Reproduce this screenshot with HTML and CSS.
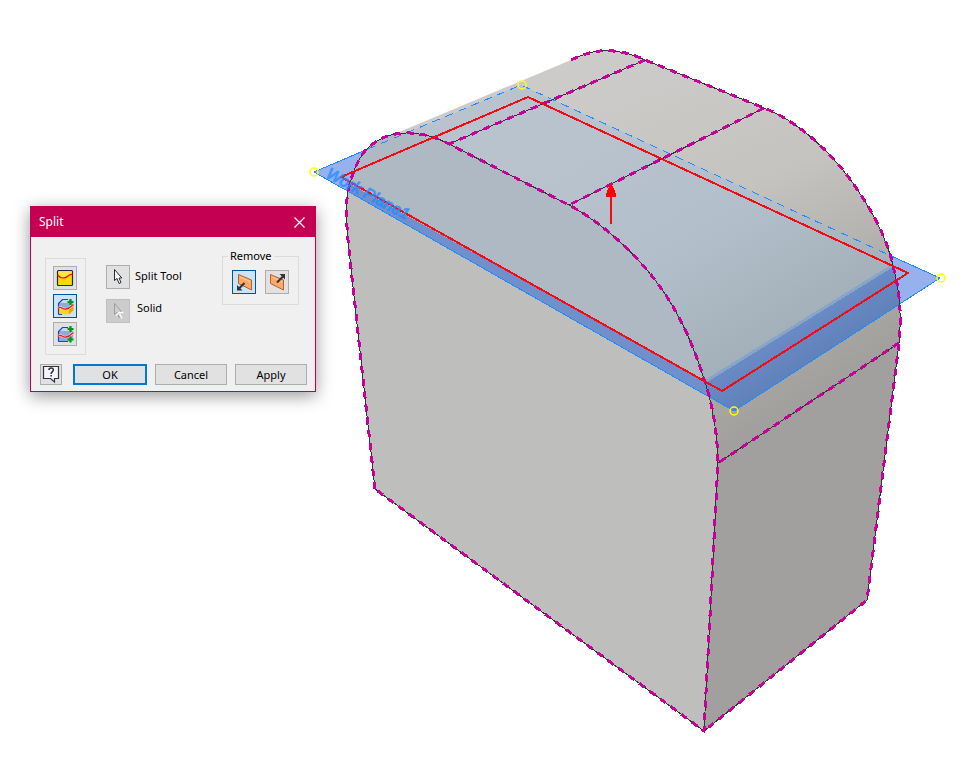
FILE: index.html
```
<!DOCTYPE html>
<html lang="en">
<head>
    <meta charset="UTF-8">
    <meta name="viewport" content="width=device-width, initial-scale=1.0">
    <title>Split</title>
    <link rel="stylesheet" href="styles.css">
</head>
<body>
    <svg class="scene" viewBox="0 0 965 773" role="img" aria-label="Solid body with work plane">
        <defs>
            <linearGradient id="topShade" gradientUnits="userSpaceOnUse" x1="640" y1="60" x2="760" y2="350">
                <stop offset="0" stop-color="#cccbc9"/>
                <stop offset="0.5" stop-color="#c4c3c0"/>
                <stop offset="1" stop-color="#aaa8a5"/>
            </linearGradient>
            <linearGradient id="cutShade" gradientUnits="userSpaceOnUse" x1="590" y1="130" x2="740" y2="390">
                <stop offset="0" stop-color="#b8c3ce"/>
                <stop offset="0.5" stop-color="#b2bec9"/>
                <stop offset="1" stop-color="#a0adb6"/>
            </linearGradient>
            <linearGradient id="sideShade" gradientUnits="userSpaceOnUse" x1="790" y1="335" x2="822" y2="388">
                <stop offset="0" stop-color="#aaa9a5"/>
                <stop offset="1" stop-color="#a1a09e"/>
            </linearGradient>
            <linearGradient id="bandShade" gradientUnits="userSpaceOnUse" x1="790" y1="325" x2="815" y2="365">
                <stop offset="0" stop-color="#6b8bc7"/>
                <stop offset="1" stop-color="#6080b8"/>
            </linearGradient>
            <path id="frontEdge" d="M375 489L349 250Q344 205 349 187Q354 166 364 152Q382 132 410 133Q430 134 449 144L569 205C611 228 643 262 663 291C683 320 695 350 706 385Q717 421 718 462L704 731Z"/>
            <path id="backEdge" d="M571 60Q588 52 600 51Q622 49 645 60L764 108C795 120 826 147 850 179C873 211 888 240 894 270Q903 304 899 343L867 600L704 731"/>
            <path id="innerEdge" d="M645 60L449 144M764 108L569 205M899 343L718 463"/>
            <clipPath id="bodyClip">
                <path d="M375 489L349 250Q344 205 349 187Q354 166 364 152Q370 145 385 138L571 60Q588 52 600 51Q622 49 645 60L764 108C795 120 826 147 850 179C873 211 888 240 894 270Q903 304 899 343L867 600L704 731Z"/>
            </clipPath>
            <clipPath id="frontClip">
                <use href="#frontEdge"/>
            </clipPath>
        </defs>

        <!-- plane outside of the body -->
        <path fill="#97b1ee" d="M314 172L521 85L940 278L734 411Z"/>

        <!-- body -->
        <g clip-path="url(#bodyClip)">
            <rect fill="url(#topShade)" x="340" y="40" width="570" height="700"/>
            <path fill="url(#sideShade)" d="M700 384L910 256V620L704 740Z"/>
            <path fill="url(#cutShade)" d="M314 172L521 85L940 278L706 384Z"/>
            <path fill="url(#bandShade)" d="M706 381L892 266L940 278L734 411L706 395Z"/>
            <path fill="none" stroke="#86a5c7" stroke-width="3" d="M706 381L892 266"/>
        </g>
        <g clip-path="url(#frontClip)">
            <rect fill="#bebebc" x="340" y="120" width="390" height="620"/>
            <path fill="#afb9c3" d="M314 172L340 120L730 120V395L706 382Z"/>
            <path fill="#7190cb" d="M314 164L706 382L734 398V411L314 172Z"/>
        </g>

        <!-- plane edges -->
        <g class="plane-edge">
            <path d="M368 149L314 172L734 411L940 278L889 255"/>
            <path class="hidden" d="M368 149L521 85L889 255"/>
        </g>

        <!-- body edges -->
        <g class="edge">
            <use href="#frontEdge"/>
            <use href="#backEdge"/>
            <use href="#innerEdge"/>
        </g>
        <g class="edge selected">
            <use href="#frontEdge"/>
            <use href="#backEdge"/>
            <use href="#innerEdge"/>
        </g>

        <!-- split outline and direction -->
        <path class="outline" d="M341 177L528 97L908 273L722 391Z"/>
        <path class="outline" d="M611 224V190"/>
        <path fill="#ff0000" d="M611 182L606 194V197H616V194Z"/>

        <text class="plane-name" transform="translate(325 177) rotate(28)">Work Plane1</text>

        <g class="handle">
            <circle cx="314" cy="172" r="4"/>
            <circle cx="522" cy="85" r="4"/>
            <circle cx="941" cy="278" r="4"/>
            <circle cx="734" cy="411" r="4"/>
        </g>
    </svg>

    <form class="dialog" role="dialog" aria-labelledby="dialogTitle">
        <header class="titlebar">
            <h1 id="dialogTitle">Split</h1>
            <button type="button" class="close" aria-label="Close">
                <svg viewBox="0 0 11 11" width="11" height="11"><path fill="none" stroke="#fff" stroke-width="1.200" d="M.5 .5L10.500 10.500M10.500 .5L.5 10.500"/></svg>
            </button>
        </header>

        <div class="content">
            <div class="group modes">
                <button type="button" class="tool" aria-label="Split Face">
                    <svg viewBox="0 0 22 22">
                        <rect x="3.500" y="3.500" width="15" height="15" rx="1" fill="#ffd800" stroke="#1b2a4a" stroke-width="1.200"/>
                        <path d="M4.500 4.500H17.500V7L12 10H8L4.500 7Z" fill="#ffe34d"/>
                        <path d="M3.500 8Q6 11 9 11T14 9T18.500 7.500" fill="none" stroke="#f01010" stroke-width="1.200"/>
                    </svg>
                </button>
                <button type="button" class="tool active" aria-label="Trim Solid" aria-pressed="true">
                    <svg viewBox="0 0 22 22">
                        <path d="M4.500 14H15L19.500 10V15L15 19.500H4.500Z" fill="#ffd21c"/>
                        <path d="M15 14L19.500 10V15L15 19.500Z" fill="#eaa800"/>
                        <path d="M4.500 13V8.500L8.500 4.500H16L19 8V11L15 13L11 13L8 12Z" fill="#8fabd6"/>
                        <path d="M4.500 8.500L8.500 4.500H15V8H4.500Z" fill="#c9d8ee"/>
                        <path d="M4.500 19.500V8.500L8.500 4.500H14M4.500 19.500H8" fill="none" stroke="#1648b0" stroke-width="1.200"/>
                        <path d="M4 13.500Q6 11.500 8 13T12 14T15 13L19.500 9.500" fill="none" stroke="#f4dede" stroke-width="2.400"/>
                        <path d="M4 13.500Q6 11.500 8 13T12 14T15 13L19.500 9.500" fill="none" stroke="#ee1620" stroke-width="1.400"/>
                        <path d="M16.500 4V10M13.500 7H19.500" stroke="#009a12" stroke-width="2.200"/>
                    </svg>
                </button>
                <button type="button" class="tool" aria-label="Split Solid">
                    <svg viewBox="0 0 22 22">
                        <path d="M4.500 18.500V8.500L8.500 4.500H16L19 8V15L15 18.500Z" fill="#8fabd6"/>
                        <path d="M4.500 8.500L8.500 4.500H15V8H4.500Z" fill="#c9d8ee"/>
                        <path d="M4.500 18.500V8.500L8.500 4.500H14M4.500 18.500H14" fill="none" stroke="#1648b0" stroke-width="1.200"/>
                        <path d="M4 13.500Q6 11.500 8 13T12 14T15 13L19.500 9.500" fill="none" stroke="#f4dede" stroke-width="2.400"/>
                        <path d="M4 13.500Q6 11.500 8 13T12 14T15 13L19.500 9.500" fill="none" stroke="#ee1620" stroke-width="1.400"/>
                        <path d="M16.500 3V9M13.500 6H19.500M16.500 13.500V19.500M13.500 16.500H19.500" stroke="#009a12" stroke-width="2.200"/>
                    </svg>
                </button>
            </div>

            <div class="pickers">
                <div class="picker">
                    <button type="button" class="tool" id="pickTool">
                        <svg viewBox="0 0 22 22"><path d="M7.500 3.500V14.500L10 12.500L12 17.500L14 16.500L12 12H14.800Z" fill="#fff" stroke="#252a38"/></svg>
                    </button>
                    <label for="pickTool">Split Tool</label>
                </div>
                <div class="picker">
                    <button type="button" class="tool" id="pickSolid" disabled>
                        <svg viewBox="0 0 22 22"><path d="M7.500 3.500V14.500L10 12.500L12 17.500L14 16.500L12 12H14.800Z" fill="#cfcfcf" stroke="#9c9c9c"/><path d="M11 12.500H16.500M12.500 13.500L15 18.500M9 15.500L11 13.500" fill="none" stroke="#fff" stroke-width="1.500"/></svg>
                    </button>
                    <label for="pickSolid">Solid</label>
                </div>
            </div>

            <fieldset class="group remove">
                <legend>Remove</legend>
                <button type="button" class="tool active" aria-label="Remove front side" aria-pressed="true">
                    <svg viewBox="0 0 22 22">
                        <path d="M5.500 3.500L18.500 9V19L5.500 12.500Z" fill="#ffa869" stroke="#b5622c"/>
                        <path d="M7 6L17 10.500" stroke="#ffd0a8"/>
                        <path d="M11.500 12L6 17.500" stroke="#30343c" stroke-width="2.200"/>
                        <path d="M4 19.500V14L9.500 19.500Z" fill="#30343c"/>
                    </svg>
                </button>
                <button type="button" class="tool" aria-label="Remove back side">
                    <svg viewBox="0 0 22 22">
                        <path d="M4.500 3.500L17.500 9V19L4.500 12.500Z" fill="#ffa869" stroke="#b5622c"/>
                        <path d="M6 6L16 10.500" stroke="#ffd0a8"/>
                        <path d="M11 11.500L17 5.500" stroke="#30343c" stroke-width="2.200"/>
                        <path d="M19 3V8.500L13.500 3Z" fill="#30343c"/>
                    </svg>
                </button>
            </fieldset>
        </div>

        <footer class="actions">
            <button type="button" class="help" aria-label="Help">
                <svg viewBox="0 0 20 19">
                    <path d="M2.500 1.500H17.500V13.500H13.500V17L9.500 13.500H2.500Z" fill="#f3f5f8" stroke="#303440" stroke-width="1.200"/>
                    <path d="M8 5Q8 3 10.200 3T12.300 5Q12.300 6 11.200 6.800T10.200 9" fill="none" stroke="#303440" stroke-width="1.600"/>
                    <path d="M9.400 10H11V11.600H9.400Z" fill="#303440"/>
                </svg>
            </button>
            <button type="button" class="action default">OK</button>
            <button type="button" class="action">Cancel</button>
            <button type="button" class="action">Apply</button>
        </footer>
    </form>
</body>
</html>
```
FILE: styles.css
```
* {
    box-sizing: border-box;
}
body {
    margin: 0;
    background: #fff;
    font-family: "Noto Sans", Tahoma, sans-serif;
    font-size: 11px;
    line-height: 14px;
    color: #000;
}
button {
    font: inherit;
    color: inherit;
}

/* model view */
.scene {
    display: block;
    width: 100%;
    height: auto;
    shape-rendering: crispEdges;
}
.plane-edge {
    fill: none;
    stroke: #1e8cff;
}
.plane-edge .hidden {
    stroke-dasharray: 8 6;
}
.plane-name {
    font: italic 16px "Liberation Sans", Arial, sans-serif;
    fill: #1e8cff;
    stroke: #1e8cff;
    opacity: 0.75;
}
.edge {
    fill: none;
    stroke: #303438;
}
.edge.selected {
    stroke: #c8009a;
    stroke-width: 3;
    stroke-dasharray: 7 6;
}
.outline {
    fill: none;
    stroke: #f50a14;
    stroke-width: 2;
}
.handle {
    fill: none;
    stroke: #ffff00;
    stroke-width: 1.5;
    shape-rendering: auto;
}

/* dialog window */
.dialog {
    position: absolute;
    top: 206px;
    left: 30px;
    width: 286px;
    background: #f0f0f0;
    border: 1px solid #c30052;
    box-shadow: 0 4px 16px rgba(0, 0, 0, 0.4);
}
.titlebar {
    display: flex;
    align-items: center;
    justify-content: space-between;
    height: 30px;
    padding: 0 10px 0 8px;
    background: #c30052;
    color: #fff;
}
.titlebar h1 {
    margin: 0;
    font-size: 12px;
    font-weight: normal;
}
.close {
    display: flex;
    padding: 0;
    border: none;
    background: none;
}
.content {
    display: flex;
    align-items: flex-start;
    padding: 12px 16px 0 14px;
}
.group {
    margin: 0;
    border: 1px solid #dcdcdc;
}
.modes {
    display: flex;
    flex-direction: column;
    gap: 4px;
    margin-top: 9px;
    padding: 7px 8px 8px 7px;
}
.tool {
    display: block;
    width: 24px;
    height: 24px;
    padding: 0;
    background: #e1e1e1;
    border: 1px solid #adadad;
}
.tool svg,
.help svg {
    display: block;
    width: 100%;
    height: 100%;
}
.tool.active {
    background: #cce4f7;
    border-color: #005499;
}
.tool:disabled {
    background: #cccccc;
    border-color: #bfbfbf;
}
.pickers {
    display: flex;
    flex: 1;
    flex-direction: column;
    gap: 10px;
    margin: 16px 0 0 20px;
}
.picker {
    display: flex;
    gap: 5px;
}
.picker label {
    padding-top: 4px;
}
.picker .tool:disabled + label {
    padding: 2px 0 0 2px;
}
.remove {
    display: flex;
    gap: 9px;
    padding: 7px 9px 10px;
}
.remove legend {
    padding: 0 2px;
    margin-left: -4px;
}
.actions {
    display: flex;
    gap: 8px;
    padding: 9px 8px 6px 9px;
}
.action,
.help {
    height: 21px;
    padding: 0;
    background: #e1e1e1;
    border: 1px solid #adadad;
}
.action {
    flex: 1;
}
.action.default {
    border: 2px solid #0078d7;
}
.help {
    width: 22px;
    margin-right: 3px;
}
```
